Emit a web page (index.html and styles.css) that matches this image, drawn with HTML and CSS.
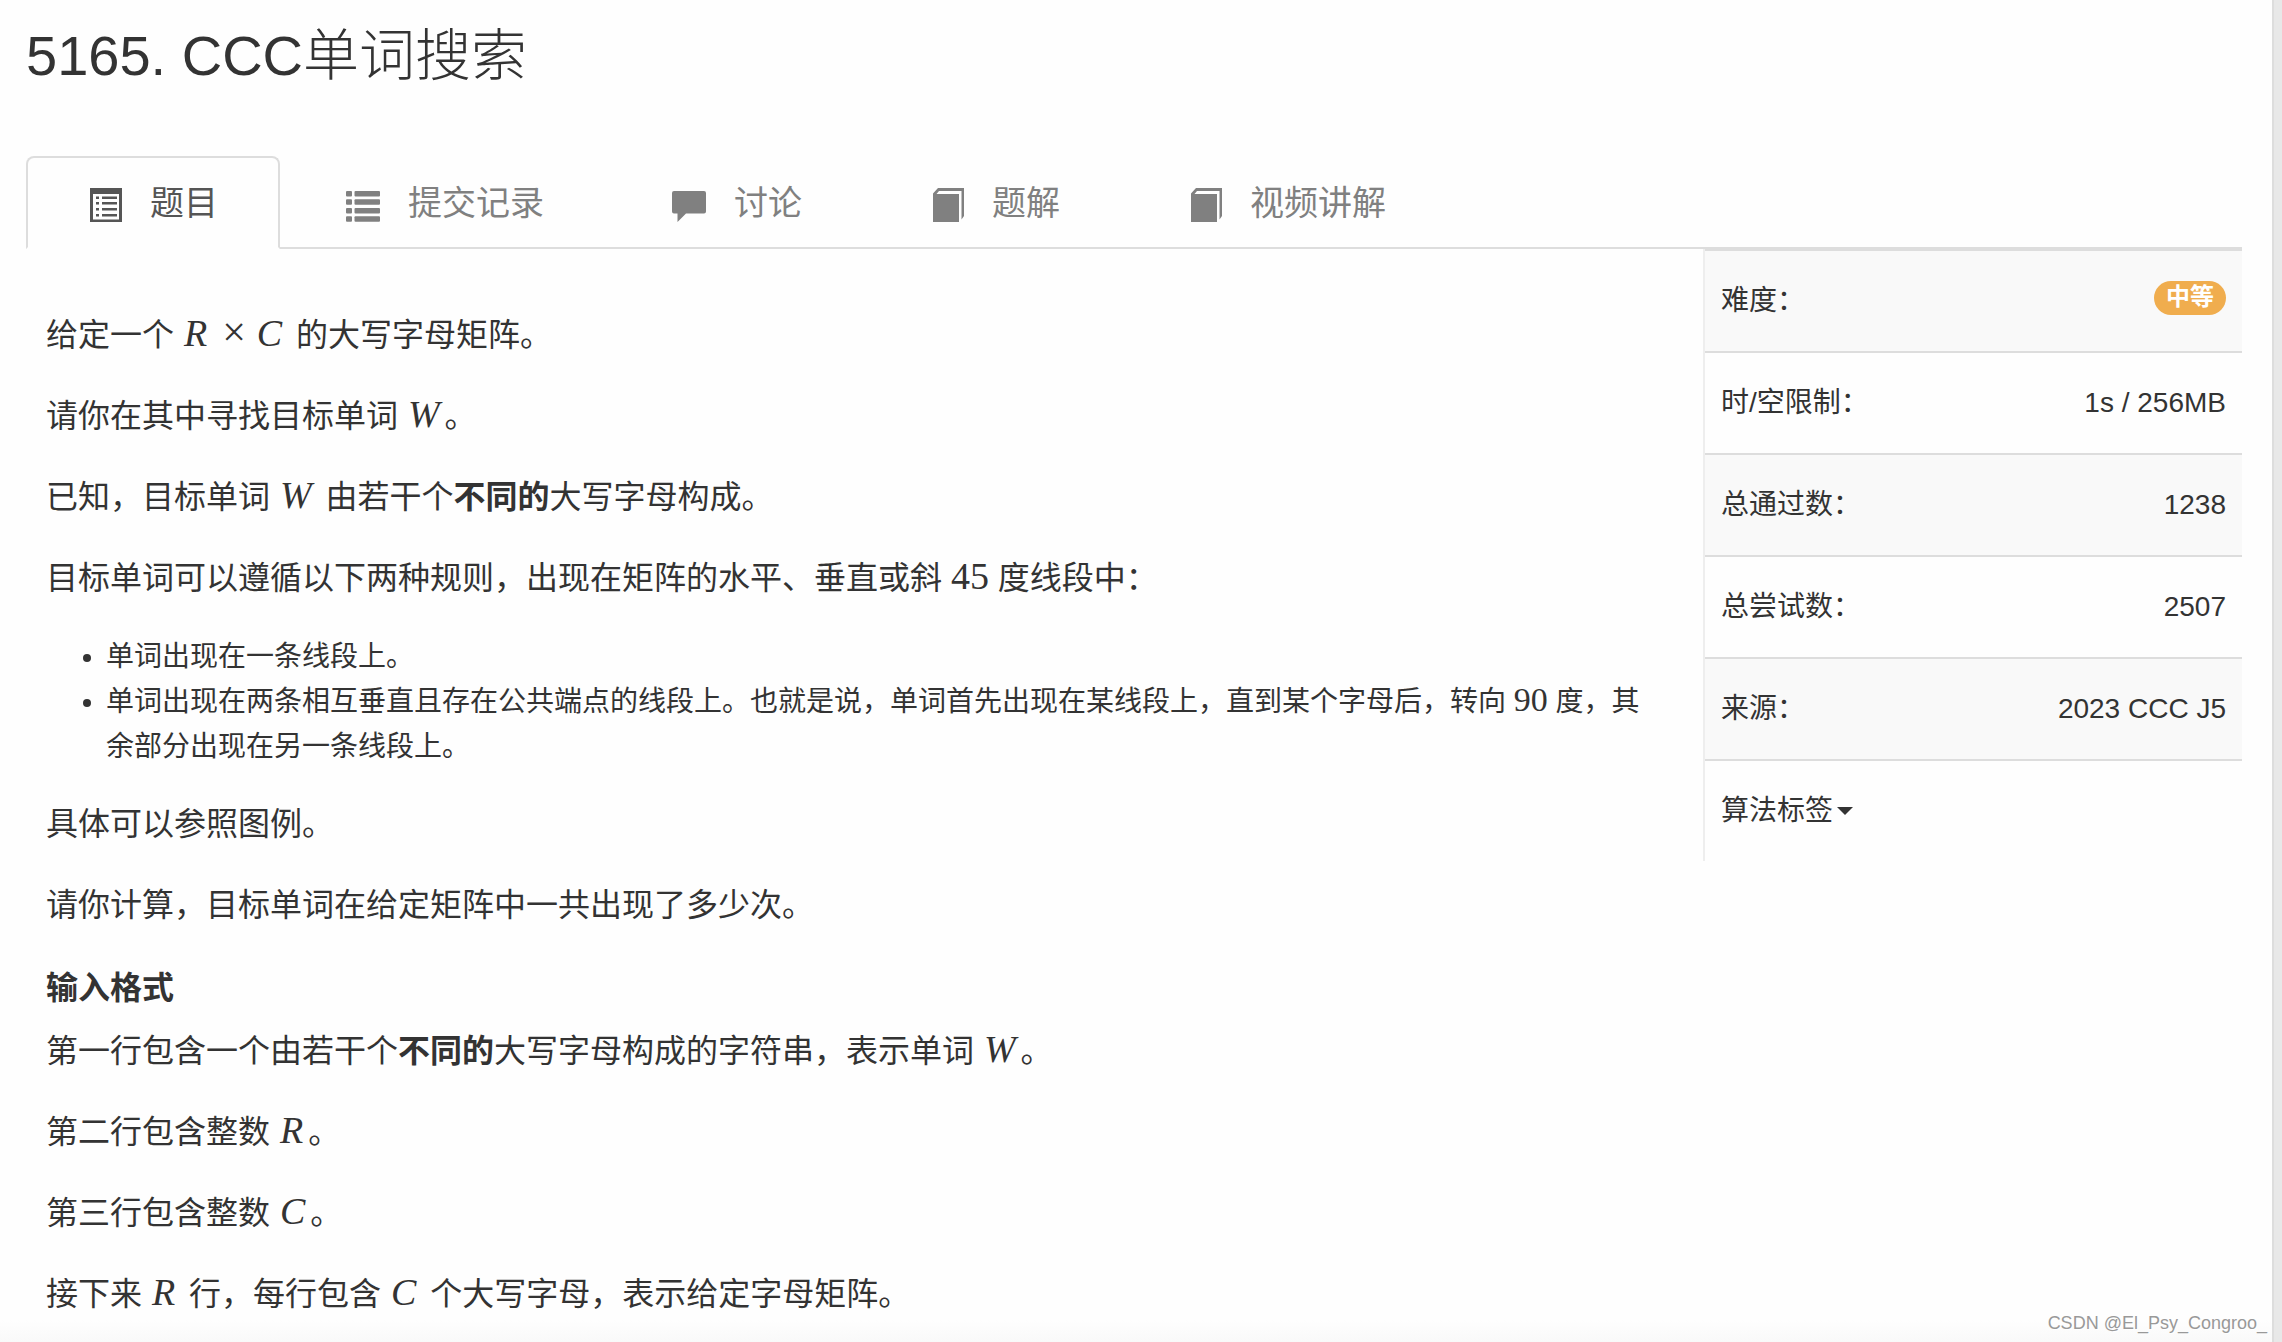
FILE: index.html
```html
<!DOCTYPE html>
<html lang="zh-CN">
<head>
    <meta charset="UTF-8">
    <title>5165. CCC单词搜索</title>
    <link rel="stylesheet" href="styles.css">
</head>
<body>
    <div class="page">
        <h1 class="title">5165. CCC单词搜索</h1>

        <nav class="tabs">
            <a class="tab active" href="#problem">
                <svg class="icon" viewBox="0 0 34 34"><path fill-rule="evenodd" d="M2 0H34V34H2ZM5 6V31.5H31V6Z"/><path d="M8 8.5h3v2.5H8zM8 14h3v2.5H8zM8 20h3v2.5H8zM8 26h3v2.5H8zM14 8.5h15v2.5h-15zM14 14h15v2.5h-15zM14 20h15v2.5h-15zM14 26h15v2.5h-15z"/></svg>
                题目
            </a>
            <a class="tab" href="#submissions">
                <svg class="icon" viewBox="0 0 34 34"><rect y="3" width="6" height="5.5" rx="1"/><rect y="11.3" width="6" height="5.5" rx="1"/><rect y="20" width="6" height="5.5" rx="1"/><rect y="28.3" width="6" height="5.5" rx="1"/><rect x="8.5" y="3" width="25.5" height="5.5" rx="1"/><rect x="8.5" y="11.3" width="25.5" height="5.5" rx="1"/><rect x="8.5" y="20" width="25.5" height="5.5" rx="1"/><rect x="8.5" y="28.3" width="25.5" height="5.5" rx="1"/></svg>
                提交记录
            </a>
            <a class="tab" href="#discussion">
                <svg class="icon" viewBox="0 0 34 34"><path d="M2 3H32Q34 3 34 5V23.5Q34 25.5 32 25.5H14L5.5 34V25.5H2Q0 25.5 0 23.5V5Q0 3 2 3Z"/></svg>
                讨论
            </a>
            <a class="tab" href="#solution">
                <svg class="icon" viewBox="0 0 34 34"><path d="M3 34V5.5L8 0H34V28L31.5 31.5V3H9L6.5 6H29V34Z"/></svg>
                题解
            </a>
            <a class="tab" href="#video">
                <svg class="icon" viewBox="0 0 34 34"><path d="M3 34V5.5L8 0H34V28L31.5 31.5V3H9L6.5 6H29V34Z"/></svg>
                视频讲解
            </a>
        </nav>

        <div class="content">
            <main class="problem" id="problem">
                <p>给定一个 <i class="math">R</i><span class="math op">×</span><i class="math">C</i> 的大写字母矩阵。</p>
                <p>请你在其中寻找目标单词 <i class="math">W</i>。</p>
                <p>已知，目标单词 <i class="math">W</i> 由若干个<strong>不同的</strong>大写字母构成。</p>
                <p>目标单词可以遵循以下两种规则，出现在矩阵的水平、垂直或斜 <span class="math num">45</span> 度线段中：</p>
                <ul>
                    <li>单词出现在一条线段上。</li>
                    <li>单词出现在两条相互垂直且存在公共端点的线段上。也就是说，单词首先出现在某线段上，直到某个字母后，转向 <span class="math num">90</span> 度，其余部分出现在另一条线段上。</li>
                </ul>
                <p>具体可以参照图例。</p>
                <p>请你计算，目标单词在给定矩阵中一共出现了多少次。</p>

                <h4>输入格式</h4>
                <p>第一行包含一个由若干个<strong>不同的</strong>大写字母构成的字符串，表示单词 <i class="math">W</i>。</p>
                <p>第二行包含整数 <i class="math">R</i>。</p>
                <p>第三行包含整数 <i class="math">C</i>。</p>
                <p>接下来 <i class="math">R</i> 行，每行包含 <i class="math">C</i> 个大写字母，表示给定字母矩阵。</p>
            </main>

            <aside class="side">
                <table class="info">
                    <tr>
                        <th scope="row">难度：</th>
                        <td><span class="badge">中等</span></td>
                    </tr>
                    <tr>
                        <th scope="row">时/空限制：</th>
                        <td>1s / 256MB</td>
                    </tr>
                    <tr>
                        <th scope="row">总通过数：</th>
                        <td>1238</td>
                    </tr>
                    <tr>
                        <th scope="row">总尝试数：</th>
                        <td>2507</td>
                    </tr>
                    <tr>
                        <th scope="row">来源：</th>
                        <td>2023 CCC J5</td>
                    </tr>
                    <tr>
                        <th scope="row" colspan="2"><button class="tags" type="button">算法标签<span class="caret"></span></button></th>
                    </tr>
                </table>
            </aside>
        </div>
    </div>
    <div class="watermark">CSDN @El_Psy_Congroo_</div>
</body>
</html>
```

FILE: styles.css
```css
* { box-sizing: border-box; }
body { margin: 0; background-color: #e8e8e8; color: #333; font-family: "Liberation Sans", "Noto Sans CJK SC", sans-serif; font-size: 28px; position: relative; }
.page { min-height: 100vh; margin-right: 8px; padding: 25px 30px 0 26px; border-right: 2px solid #ddd; background: linear-gradient(to top, #f9f9f9, #fefefe 22px); }
.title { margin: 0 0 69px; font-size: 56px; line-height: 62px; font-weight: 300; }

/* tabs */
.tabs { display: flex; gap: 4px; border-bottom: 2px solid #ddd; }
.tab { display: flex; align-items: center; gap: 28px; margin-bottom: -2px; padding: 21px 60px 19px; border: 2px solid transparent; border-radius: 8px 8px 0 0; color: #808080; font-size: 34px; line-height: 49px; text-decoration: none; }
.tab.active { color: #555; background-color: #fefefe; border-color: #ddd; border-bottom-color: #fefefe; }
.icon { width: 34px; height: 34px; margin-top: 2px; fill: currentColor; }

/* problem text */
.content { display: grid; grid-template-columns: 28fr 9fr; align-items: start; }
.problem { padding: 61px 46px 0 20px; }
.problem p { margin: 0 0 30px; font-size: 32px; line-height: 51px; }
.problem p:last-child { margin-bottom: 0; }
.problem ul { margin: 0 0 30px; padding-left: 60px; line-height: 45px; }
.problem h4 { margin: 40px 0 20px; font-size: 32px; line-height: 35px; }
.math { margin: 0 5px 0 1px; font-family: "Liberation Serif", serif; font-size: 38px; line-height: 1; }
.math.op { margin: 0 10px; font-size: 42px; }
.math.num { margin: 0; }
li .math { font-size: 34px; }

/* info table */
.info { width: 100%; border-collapse: separate; border-spacing: 0; border-left: 2px solid #eee; line-height: 40px; }
.info th, .info td { padding: 30px 16px; border-top: 2px solid #ddd; font-weight: normal; text-align: left; vertical-align: top; }
.info td { text-align: right; }
.info tr:nth-child(odd) { background-color: #f9f9f9; }
.info tr:last-child th { background-color: #fefefe; }
.badge { display: inline-block; padding: 4px 12px 6px; border-radius: 20px; background-color: #f0ad4e; color: white; font-size: 24px; font-weight: bold; line-height: 24px; vertical-align: top; }
.tags { display: inline-flex; align-items: center; gap: 4px; padding: 0; border: none; background: none; color: inherit; font: inherit; line-height: 40px; cursor: pointer; }
.caret { border-top: 8px solid; border-left: 8px solid transparent; border-right: 8px solid transparent; }

.watermark { position: absolute; right: 15px; bottom: 9px; color: #999; font-size: 18px; line-height: 20px; text-shadow: 1px 1px 0 #fff; }
```
